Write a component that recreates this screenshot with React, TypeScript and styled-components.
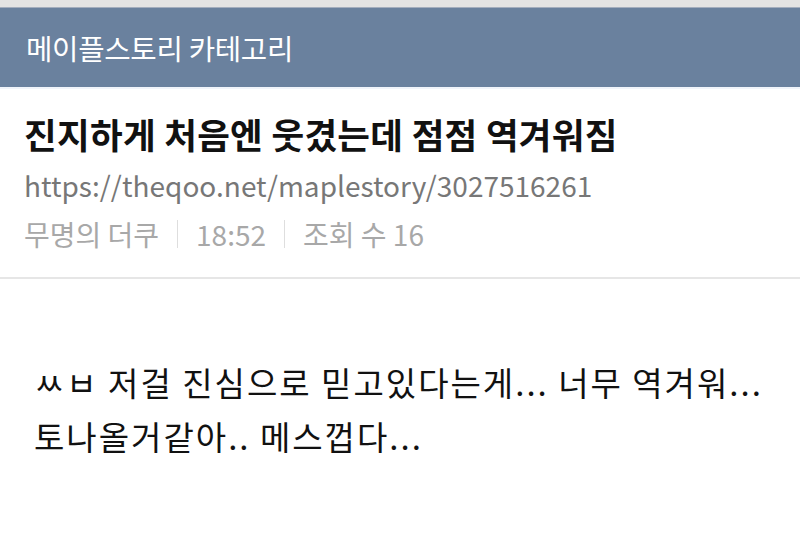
import styled, { createGlobalStyle } from "styled-components";

const GlobalStyle = createGlobalStyle`
  html, body {
    margin: 0;
    padding: 0;
    background: #ffffff;
  }
  body {
    font-family: "Noto Sans CJK KR", "Noto Sans", sans-serif;
  }
`;

const App = () => {
  return (
    <Page>
      <GlobalStyle />
      <TopStrip />
      <CategoryBar>
        <CategoryTitle>메이플스토리 카테고리</CategoryTitle>
      </CategoryBar>

      <PostHeader>
        <PostTitle>진지하게 처음엔 웃겼는데 점점 역겨워짐</PostTitle>
        <PostUrl>https://theqoo.net/maplestory/3027516261</PostUrl>
        <MetaRow>
          <MetaItem>무명의 더쿠</MetaItem>
          <MetaDivider />
          <MetaItem>18:52</MetaItem>
          <MetaDivider />
          <MetaItem>조회 수 16</MetaItem>
        </MetaRow>
      </PostHeader>

      <PostBody>
        <BodyLine>ㅆㅂ 저걸 진심으로 믿고있다는게... 너무 역겨워...</BodyLine>
        <BodyLine>토나올거같아.. 메스껍다...</BodyLine>
      </PostBody>
    </Page>
  );
};

export default App;

const Page = styled.div`
  width: 800px;
  height: 553px;
  overflow: hidden;
  background: #ffffff;
`;

const TopStrip = styled.div`
  height: 7px;
  background: #e3e3e3;
  border-bottom: 1px solid #a3adbd;
`;

const CategoryBar = styled.div`
  display: flex;
  align-items: center;
  height: 79px;
  padding: 0 26px;
  background: #6a819e;
  border-bottom: 2px solid #f0f4fa;
`;

const CategoryTitle = styled.div`
  color: #ffffff;
  font-size: 28.7px;
  letter-spacing: -0.3px;
`;

const PostHeader = styled.div`
  display: flex;
  flex-direction: column;
  padding: 20px 24px 0;
  height: 168px;
  border-bottom: 2px solid #e6e6e6;
`;

const PostTitle = styled.div`
  color: #111111;
  font-size: 35.5px;
  font-weight: 700;
  letter-spacing: 0.3px;
  line-height: 50px;
  white-space: nowrap;
`;

const PostUrl = styled.div`
  margin-top: 2px;
  color: #777777;
  font-size: 28px;
  line-height: 48px;
  white-space: nowrap;
`;

const MetaRow = styled.div`
  display: flex;
  align-items: center;
  gap: 18px;
  height: 50px;
  color: #a8a8a8;
  font-size: 28px;
  white-space: nowrap;
`;

const MetaItem = styled.span``;

const MetaDivider = styled.span`
  width: 1px;
  height: 28px;
  background: #dedede;
`;

const PostBody = styled.div`
  padding: 76px 34px 0;
`;

const BodyLine = styled.div`
  color: #111111;
  font-size: 33px;
  letter-spacing: 2px;
  line-height: 54px;
  white-space: nowrap;
`;
